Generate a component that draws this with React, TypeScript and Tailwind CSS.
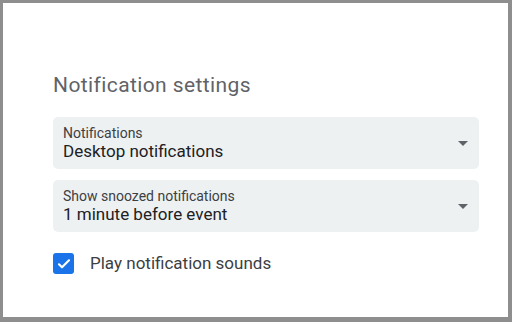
type SelectProps = {
  label: string;
  value: string;
};

function SelectField({ label, value }: SelectProps) {
  return (
    <div className="flex h-[52px] items-center rounded-[5px] bg-[#eef1f2] pl-[10px] pr-[11px]">
      <div className="flex flex-1 flex-col">
        <span className="text-[14px] leading-[16px] text-[#3c4043]">{label}</span>
        <span className="text-[17px] leading-[21px] text-[#202124]">{value}</span>
      </div>
      <svg width="10" height="5" viewBox="0 0 10 5">
        <path d="M0 0h10L5 5z" fill="#5f6368" />
      </svg>
    </div>
  );
}

export default function App() {
  return (
    <div
      className="h-[322px] w-[512px] border-t-[3px] border-l-[3px] border-r-[4px] border-b-[5px] border-[#8e8e8e] bg-white"
      style={{ fontFamily: "Roboto, 'Liberation Sans', sans-serif" }}
    >
      <div className="flex flex-col pl-[50px] pr-[29px] pt-[68px]">
        <h1 className="text-[21px] leading-[28px] tracking-[0.4px] text-[#5f6368]">Notification settings</h1>
        <div className="mt-[18px] flex flex-col gap-[11px]">
          <SelectField label="Notifications" value="Desktop notifications" />
          <SelectField label="Show snoozed notifications" value="1 minute before event" />
        </div>
        <label className="mt-[19px] flex items-center gap-[16px]">
          <span className="flex h-[21px] w-[21px] items-center justify-center rounded-[3px] bg-[#1a73e8]">
            <svg width="16" height="16" viewBox="0 0 24 24">
              <path d="M4.5 12.5l4.5 4.5L19.5 6.5" fill="none" stroke="white" strokeWidth="3.2" strokeLinecap="round" strokeLinejoin="round" />
            </svg>
          </span>
          <span className="text-[17px] text-[#3c4043]">Play notification sounds</span>
        </label>
      </div>
    </div>
  );
}
